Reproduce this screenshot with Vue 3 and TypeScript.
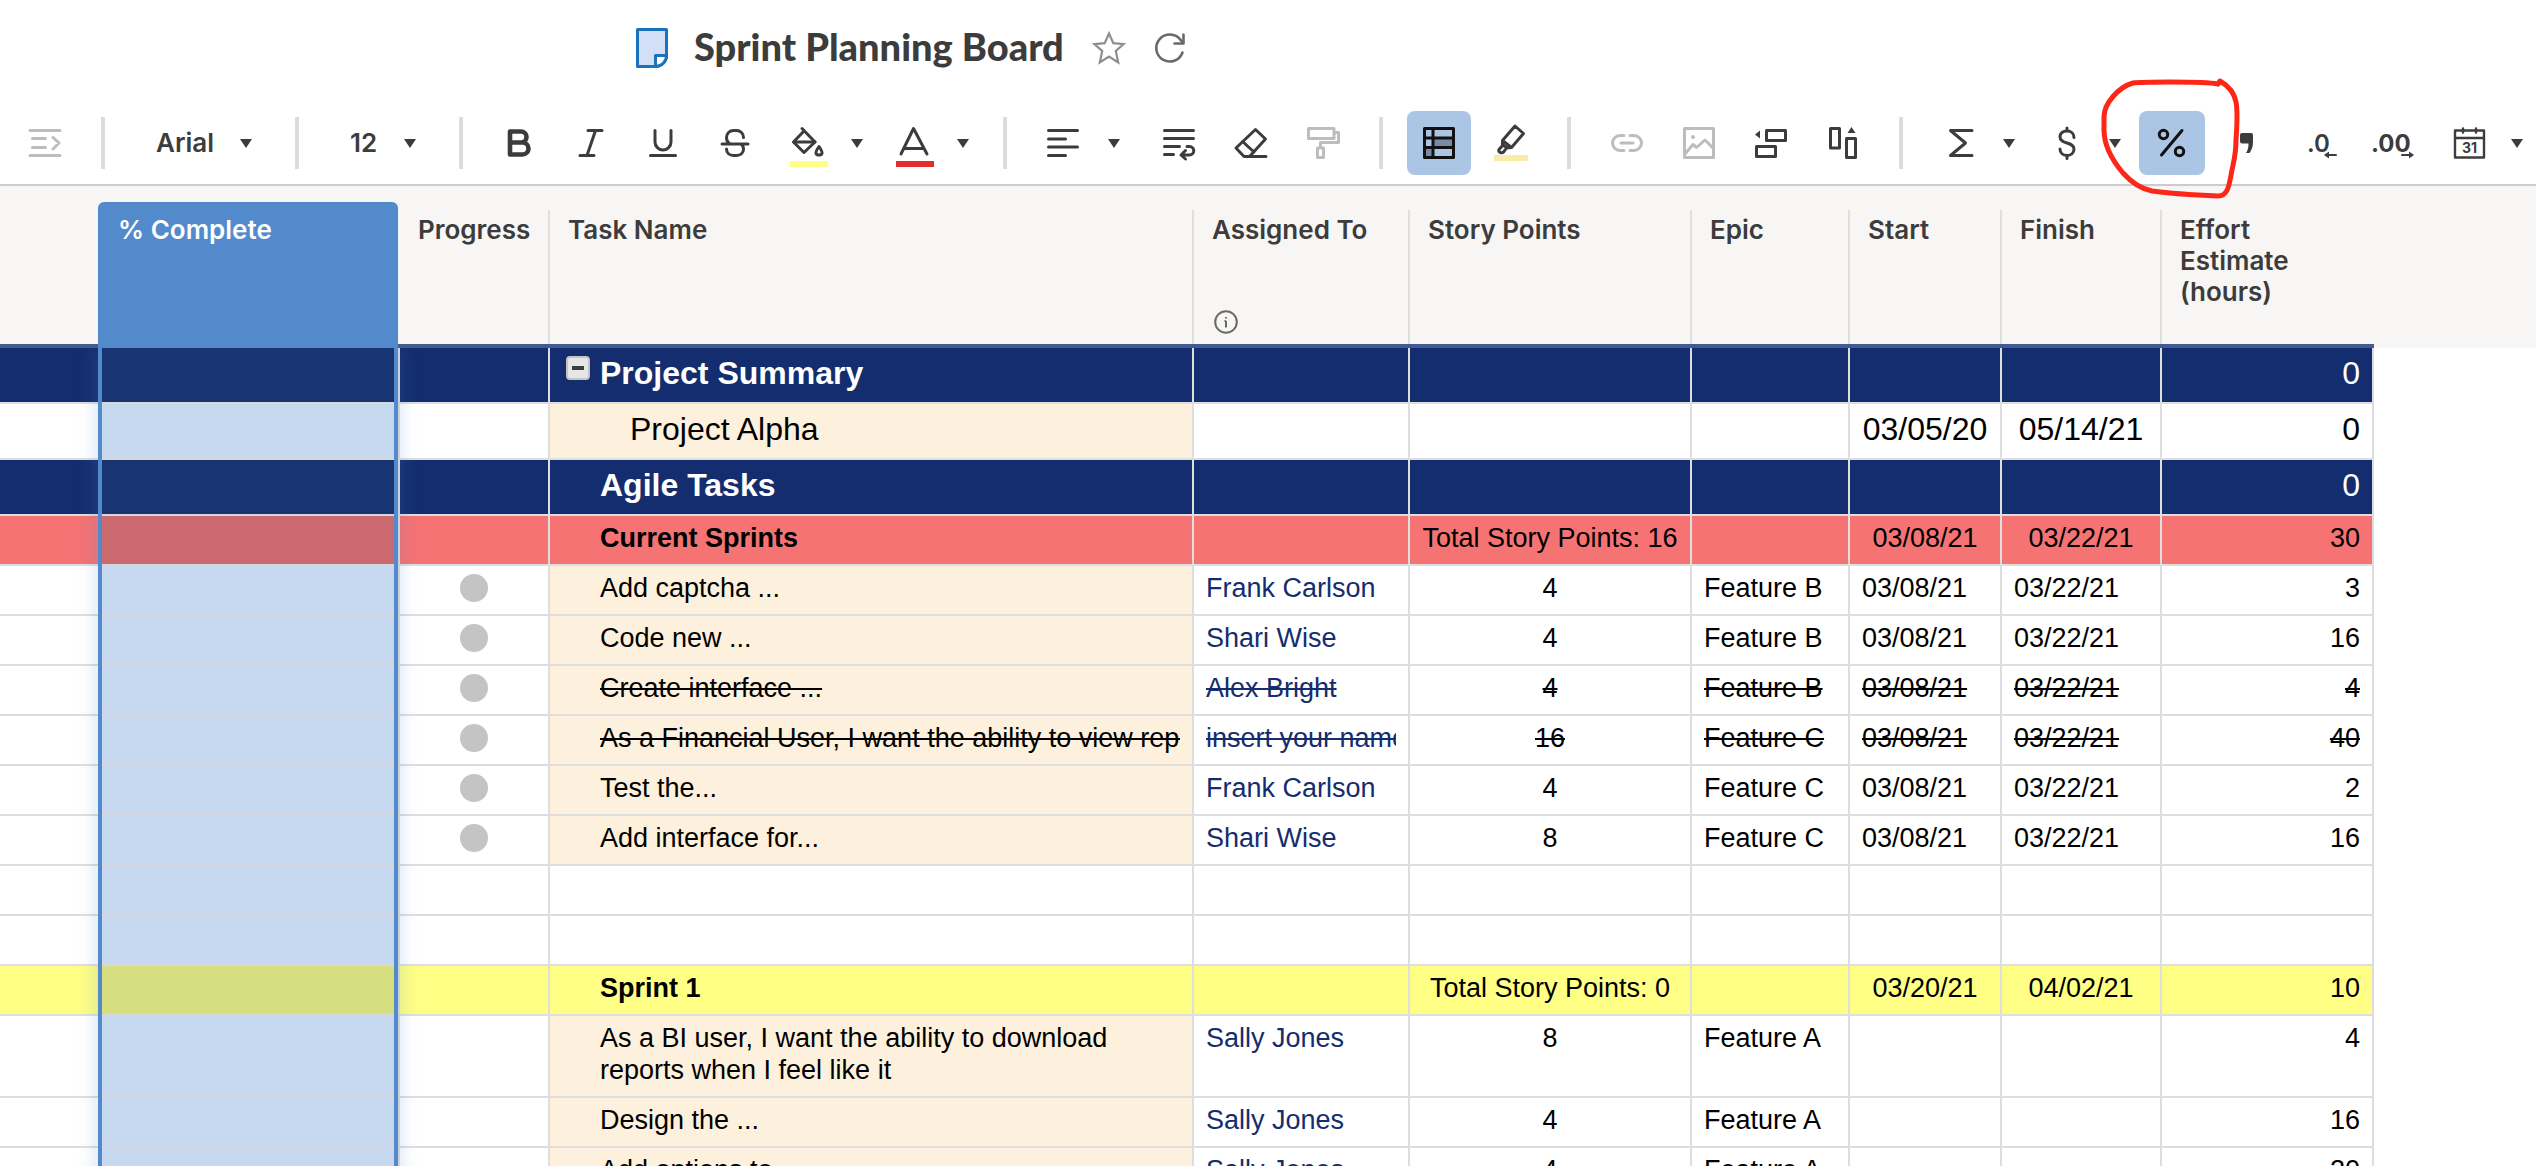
<script setup lang="ts">
import { ref } from 'vue'

type RowKind = 'summary' | 'current' | 'sprint' | 'task' | 'empty'

interface Row {
  kind: RowKind
  large?: boolean
  toggle?: boolean
  child?: boolean
  wrap?: boolean
  done?: boolean
  dot?: boolean
  centerDates?: boolean
  task?: string
  assigned?: string
  points?: string
  epic?: string
  start?: string
  finish?: string
  effort?: string
}

const font = ref('Arial')
const size = ref('12')

const columns = [
  { key: 'lead', label: '' },
  { key: 'complete', label: '% Complete' },
  { key: 'progress', label: 'Progress' },
  { key: 'task', label: 'Task Name' },
  { key: 'assigned', label: 'Assigned To', info: true },
  { key: 'points', label: 'Story Points' },
  { key: 'epic', label: 'Epic' },
  { key: 'start', label: 'Start' },
  { key: 'finish', label: 'Finish' },
  { key: 'effort', label: 'Effort Estimate (hours)' },
]

const rows: Row[] = [
  { kind: 'summary', large: true, toggle: true, task: 'Project Summary', effort: '0' },
  { kind: 'task', large: true, child: true, centerDates: true, task: 'Project Alpha', start: '03/05/20', finish: '05/14/21', effort: '0' },
  { kind: 'summary', large: true, task: 'Agile Tasks', effort: '0' },
  { kind: 'current', centerDates: true, task: 'Current Sprints', points: 'Total Story Points: 16', start: '03/08/21', finish: '03/22/21', effort: '30' },
  { kind: 'task', dot: true, task: 'Add captcha ...', assigned: 'Frank Carlson', points: '4', epic: 'Feature B', start: '03/08/21', finish: '03/22/21', effort: '3' },
  { kind: 'task', dot: true, task: 'Code new ...', assigned: 'Shari Wise', points: '4', epic: 'Feature B', start: '03/08/21', finish: '03/22/21', effort: '16' },
  { kind: 'task', dot: true, done: true, task: 'Create interface ...', assigned: 'Alex Bright', points: '4', epic: 'Feature B', start: '03/08/21', finish: '03/22/21', effort: '4' },
  { kind: 'task', dot: true, done: true, task: 'As a Financial User, I want the ability to view reports', assigned: 'insert your name', points: '16', epic: 'Feature C', start: '03/08/21', finish: '03/22/21', effort: '40' },
  { kind: 'task', dot: true, task: 'Test the...', assigned: 'Frank Carlson', points: '4', epic: 'Feature C', start: '03/08/21', finish: '03/22/21', effort: '2' },
  { kind: 'task', dot: true, task: 'Add interface for...', assigned: 'Shari Wise', points: '8', epic: 'Feature C', start: '03/08/21', finish: '03/22/21', effort: '16' },
  { kind: 'empty' },
  { kind: 'empty' },
  { kind: 'sprint', centerDates: true, task: 'Sprint 1', points: 'Total Story Points: 0', start: '03/20/21', finish: '04/02/21', effort: '10' },
  { kind: 'task', wrap: true, task: 'As a BI user, I want the ability to download reports when I feel like it', assigned: 'Sally Jones', points: '8', epic: 'Feature A', effort: '4' },
  { kind: 'task', task: 'Design the ...', assigned: 'Sally Jones', points: '4', epic: 'Feature A', effort: '16' },
  { kind: 'task', task: 'Add options to...', assigned: 'Sally Jones', points: '4', epic: 'Feature A', effort: '20' },
]
</script>

<template>
  <div class="app">
    <header class="titlebar">
      <svg class="sheet-icon" width="32" height="40" viewBox="0 0 32 40" aria-hidden="true">
        <path d="M1.5 1.5h29v26c0 6-5 11-11 11h-18z" fill="#d3dff6" stroke="#1a72bd" stroke-width="3" stroke-linejoin="round" />
        <path d="M19.5 38.5v-11h11c0 6-5 11-11 11z" fill="#fff" stroke="#1a72bd" stroke-width="3" stroke-linejoin="round" />
      </svg>
      <h1>Sprint Planning Board</h1>
      <button class="plain star" aria-label="Favorite">
        <svg width="34" height="34" viewBox="0 0 34 34"><path d="M17 2.500l4.300 9.600 10.400 1-7.900 6.900 2.400 11.400-9.200-5.900-9.200 5.900L10.200 20 2.300 13.100l10.400-1z" fill="none" stroke="#8e8e8e" stroke-width="2.200" /></svg>
      </button>
      <button class="plain" aria-label="Refresh">
        <svg width="34" height="34" viewBox="0 0 34 34"><g fill="none" stroke="#6a6a6a" stroke-width="2.600" stroke-linecap="round" stroke-linejoin="round"><path d="M30.500 21.500A13.500 13.500 0 1 1 28.500 8.800L30.800 11.800" /><path d="M31.500 3.500v9h-9" /></g></svg>
      </button>
    </header>

    <div class="toolbar" role="toolbar">
      <button class="tool muted" aria-label="Indent">
        <svg viewBox="0 0 40 56"><path d="M5 15.500h30M7.500 23.500h13M7.500 32.500h13M5 40.500h30M28 22.500l6 5.500-6 6" /></svg>
      </button>
      <span class="sep"></span>
      <label class="picker font-picker">
        <select v-model="font" aria-label="Font"><option>Arial</option><option>Verdana</option></select>
        <svg class="caret" viewBox="0 0 12 9"><path d="M0 0h12L6 9z" /></svg>
      </label>
      <span class="sep"></span>
      <label class="picker size-picker">
        <select v-model="size" aria-label="Font size"><option>10</option><option>12</option></select>
        <svg class="caret" viewBox="0 0 12 9"><path d="M0 0h12L6 9z" /></svg>
      </label>
      <span class="sep"></span>
      <button class="tool" aria-label="Bold">
        <svg viewBox="0 0 40 56"><path stroke-width="4.600" d="M11 16.500v23h12.500a6 6 0 0 0 0-12H11M11 16.500h11a5.500 5.500 0 0 1 0 11" /></svg>
      </button>
      <button class="tool" aria-label="Italic">
        <svg viewBox="0 0 40 56"><path d="M17 15.500h14M9 40.500h14M24.500 15.500L16 40.500" /></svg>
      </button>
      <button class="tool" aria-label="Underline">
        <svg viewBox="0 0 40 56"><path d="M12 15.500V27a8 8 0 0 0 16 0V15.500M7.500 40.500h25" /></svg>
      </button>
      <button class="tool" aria-label="Strikethrough">
        <svg viewBox="0 0 40 56"><path d="M28.500 22.500c0-4-3-7-7-7h-3c-4 0-7 3-7 7 0 3 1 5 3 6M11.500 34c0 4 3 6.500 7 6.500h3c4 0 7-2.500 7-6.500 0-2-1-4-3-5M7 29h26" /></svg>
      </button>
      <button class="tool split" aria-label="Fill color">
        <svg viewBox="0 0 40 56">
          <path d="M13 13.500l13 13.500L15 37.500 4.500 27 14.500 16.500" />
          <path d="M5 27h21" />
          <path d="M30 31.500c-5 7-3 8.500 0 8.500s5-1.500 0-8.500z" />
          <rect x="1" y="46" width="38" height="6" fill="#ffff85" stroke="none" />
        </svg>
        <svg class="caret" viewBox="0 0 12 9"><path d="M0 0h12L6 9z" /></svg>
      </button>
      <button class="tool split" aria-label="Text color">
        <svg viewBox="0 0 40 56">
          <path d="M6 39L18.500 13.500 32 39M10 33.500h18" />
          <rect x="1" y="46" width="38" height="6" fill="#e52c2c" stroke="none" />
        </svg>
        <svg class="caret" viewBox="0 0 12 9"><path d="M0 0h12L6 9z" /></svg>
      </button>
      <span class="sep"></span>
      <button class="tool split align" aria-label="Align">
        <svg viewBox="0 0 40 56"><path d="M5.500 15.500h29M5.500 24h17M5.500 32h29M5.500 40.500h17" /></svg>
        <svg class="caret" viewBox="0 0 12 9"><path d="M0 0h12L6 9z" /></svg>
      </button>
      <button class="tool" aria-label="Wrap text">
        <svg viewBox="0 0 40 56"><path d="M5.500 15.500h29M5.500 23.500h29M5.500 31.500h15M5.500 39.500h9M28 31.500h2.500a4.200 4.200 0 0 1 0 8.500H22M26.500 35.500L22 40l4.500 4" /></svg>
      </button>
      <button class="tool" aria-label="Clear format">
        <svg viewBox="0 0 40 56"><path d="M35 41.500H13L5 33 24.500 14.500l10 9.500L19 41M11.500 26.500L23 37" /></svg>
      </button>
      <button class="tool muted" aria-label="Format painter">
        <svg viewBox="0 0 40 56"><path d="M5.500 13.500H31v10H5.500zM31 17.500h4.500v10h-18V33M14.500 33h6v9.500h-6z" /></svg>
      </button>
      <span class="sep"></span>
      <button class="tool active" aria-label="Conditional formatting">
        <svg viewBox="0 0 40 56">
          <path d="M14 23h20v9.500H14zM6 32.500h8v9H6z" fill="#7a8aa5" stroke="none" />
          <path d="M5.500 13.500h29v29h-29zM14 13.500v29M5.500 23h29M5.500 32.500h29" />
        </svg>
      </button>
      <button class="tool" aria-label="Highlight changes">
        <svg viewBox="0 0 40 56">
          <path d="M24 11l8.500 7.500L20.500 32.500l-9-7zM11.500 25.500v5L8 34.500c-1 3 3 4.500 5 2l2.500-3.500 4.500-.5M12 30l4 3" />
          <rect x="3" y="40" width="34" height="6" rx="1" fill="#faeba9" stroke="none" />
        </svg>
      </button>
      <span class="sep"></span>
      <button class="tool muted" aria-label="Link">
        <svg viewBox="0 0 40 56"><path d="M17 20.500h-4a7.500 7.500 0 0 0 0 15h4M23 20.500h4a7.500 7.500 0 0 1 0 15h-4M14 28h12" /></svg>
      </button>
      <button class="tool muted" aria-label="Image">
        <svg viewBox="0 0 40 56"><path d="M5.500 13.500h29v29h-29zM6 39l8-9.500 3.500 3L26 25l8.500 8.500" /><circle cx="14" cy="22" r="2" class="solid" /></svg>
      </button>
      <button class="tool" aria-label="Insert row">
        <svg viewBox="0 0 40 56"><path d="M15.500 15.500h19v10h-19zM5.500 31.500h19v10h-19z" /><path class="solid" d="M4 19.500l5-4v8z" /></svg>
      </button>
      <button class="tool" aria-label="Insert column">
        <svg viewBox="0 0 40 56"><path d="M7.500 13.500h9V33h-9zM23.500 23.500h9v19h-9z" /><path class="solid" d="M28.500 12l4 6h-8z" /></svg>
      </button>
      <span class="sep"></span>
      <button class="tool split" aria-label="Sum">
        <svg viewBox="0 0 40 56"><path d="M31 15.500H9.500L24.500 28 9.500 40.500H31" /></svg>
        <svg class="caret" viewBox="0 0 12 9"><path d="M0 0h12L6 9z" /></svg>
      </button>
      <button class="tool split" aria-label="Currency format">
        <svg viewBox="0 0 40 56"><path d="M27 22.500c0-4-3-6.500-7-6.500s-7 2-7 6c0 8 14 4 14 12 0 4-3 6.500-7 6.500s-7-2.500-7-6.500M20 13v3M20 40.500v3" /></svg>
        <svg class="caret" viewBox="0 0 12 9"><path d="M0 0h12L6 9z" /></svg>
      </button>
      <span class="marked">
        <button class="tool wide active" aria-label="Percent format">
          <svg viewBox="0 0 40 56"><circle cx="11.500" cy="19.500" r="4.200" /><circle cx="27.500" cy="36.500" r="4.200" /><path d="M30 15.500L9.500 40" /></svg>
        </button>
        <svg class="scribble" width="160" height="140" viewBox="0 0 160 140" aria-hidden="true">
          <path d="M128 14C118 12 100 12 80 12C64 12 50 12 43 13C29 17 14 33 14 47V60C14 75 22 90 33 103C42 113 52 119 62 121C84 124 104 125 128 126C138 126 139 116 142 100C144 90 146 84 146 70C147 56 148 42 146 32C144 22 137 15 130 11L128 14" />
        </svg>
      </span>
      <button class="tool wide" aria-label="Thousands format">
        <svg viewBox="0 0 40 56"><path class="comma" d="M14 20a2 2 0 0 1 2-2h9a2 2 0 0 1 2 2v7c0 5-1.500 8-3.500 11H20c2-3 2.500-6 2.500-9.500H16a2 2 0 0 1-2-2z" /></svg>
      </button>
      <button class="tool wide" aria-label="Decrease decimal">
        <svg viewBox="0 0 40 56"><text x="7" y="37" font-size="24" font-weight="600">.0</text><path stroke-width="2" d="M26 40h10" /><path class="solid" d="M24 40l5-3.500v7z" /></svg>
      </button>
      <button class="tool wide" aria-label="Increase decimal">
        <svg viewBox="0 0 40 56"><text x="-3" y="37" font-size="24" font-weight="700">.00</text><path stroke-width="2" d="M28 40h10" /><path class="solid" d="M40 40l-5-3.500v7z" /></svg>
      </button>
      <button class="tool split" aria-label="Date format">
        <svg viewBox="0 0 40 56"><path stroke-width="2.400" d="M6 15.500h29v27H6zM6 23h29M14 13.500v4M27 13.500v4" /><text x="20.500" y="37.500" font-size="14" font-weight="700" text-anchor="middle">31</text></svg>
        <svg class="caret" viewBox="0 0 12 9"><path d="M0 0h12L6 9z" /></svg>
      </button>
    </div>

    <main class="sheet">
      <table>
        <colgroup>
          <col v-for="c in columns" :key="c.key" :class="'w-' + c.key" />
        </colgroup>
        <thead>
          <tr>
            <th v-for="c in columns" :key="c.key" scope="col" :class="'h-' + c.key">
              <div class="head">
                <span class="head-label">{{ c.label }}</span>
                <svg v-if="c.info" class="info" width="24" height="24" viewBox="0 0 24 24" aria-hidden="true">
                  <circle cx="12" cy="12" r="10.800" />
                  <path d="M12 11v6.500M10.500 11H12M12 7v1.500" />
                </svg>
              </div>
            </th>
          </tr>
        </thead>
        <tbody>
          <tr v-for="(r, i) in rows" :key="i" :class="[r.kind, { large: r.large, done: r.done }]">
            <td class="lead"></td>
            <td class="picked"></td>
            <td class="progress"><span v-if="r.dot" class="dot"></span></td>
            <td class="task-cell">
              <div class="task-line">
                <span class="gutter" :class="{ deep: r.child }">
                  <button v-if="r.toggle" class="toggle" aria-label="Collapse"><span></span></button>
                </span>
                <span class="value" :class="{ wrap: r.wrap }">{{ r.task }}</span>
              </div>
            </td>
            <td class="person"><div class="value">{{ r.assigned }}</div></td>
            <td class="center"><div class="value">{{ r.points }}</div></td>
            <td><div class="value">{{ r.epic }}</div></td>
            <td :class="{ center: r.centerDates }"><div class="value">{{ r.start }}</div></td>
            <td :class="{ center: r.centerDates }"><div class="value">{{ r.finish }}</div></td>
            <td class="right"><div class="value">{{ r.effort }}</div></td>
          </tr>
        </tbody>
      </table>
      <div class="selection"></div>
    </main>
  </div>
</template>

<style>
body {
  margin: 0;
  background: #fff;
}
</style>

<style scoped>
.app {
  display: flex;
  flex-direction: column;
  height: 100vh;
  overflow: hidden;
  background: #fff;
  color: #3c3c3c;
  font-family: "Liberation Sans", Arial, sans-serif;
}

button {
  margin: 0;
  padding: 0;
  border: 0;
  background: none;
  font: inherit;
  color: inherit;
}

/* Title */
.titlebar {
  display: flex;
  flex: none;
  align-items: center;
  height: 96px;
  padding: 0 0 6px 636px;
}

.titlebar h1 {
  margin: 0 28px 4px 26px;
  font-family: Lato, sans-serif;
  font-size: 38px;
  font-weight: 900;
  line-height: 44px;
  white-space: nowrap;
}

.plain svg {
  display: block;
}

.star {
  margin-right: 26px;
}

/* Toolbar */
.toolbar {
  display: flex;
  flex: none;
  align-items: center;
  height: 82px;
  padding-left: 9px;
  border-bottom: 2px solid #ccc;
}

.sep {
  flex: none;
  width: 4px;
  height: 52px;
  margin: 0 20px;
  background: #dcdcdc;
}

.picker {
  display: grid;
  flex: none;
  align-items: center;
  height: 64px;
}

.picker > * {
  grid-area: 1 / 1;
}

.font-picker {
  width: 150px;
}

.size-picker {
  width: 120px;
}

.picker select {
  width: 100%;
  height: 64px;
  padding: 0 0 2px 31px;
  border: 0;
  background: none;
  appearance: none;
  color: #3c3c3c;
  font-family: Inter, sans-serif;
  font-size: 26px;
  font-weight: 600;
}

.picker .caret {
  justify-self: end;
  margin-right: 23px;
  pointer-events: none;
}

.tool {
  display: flex;
  flex: none;
  align-items: center;
  justify-content: center;
  width: 72px;
  height: 64px;
}

.tool svg {
  flex: none;
  width: 40px;
  height: 56px;
  overflow: visible;
  fill: none;
  stroke: #3c3c3c;
  stroke-width: 3;
  stroke-linecap: round;
  stroke-linejoin: round;
}

.tool text {
  fill: #3c3c3c;
  stroke: none;
  font-family: Inter, sans-serif;
}

.tool .solid,
.tool .comma {
  fill: #3c3c3c;
  stroke: none;
}

.muted svg {
  stroke: #bdbdbd;
}

.tool.muted .solid {
  fill: #bdbdbd;
}

.tool.split {
  justify-content: flex-start;
  width: 106px;
  padding-left: 18px;
}

.tool.split.align {
  width: 116px;
  padding-left: 16px;
}

.tool.wide {
  width: 74px;
}

svg.caret,
.tool svg.caret {
  width: 12px;
  height: 9px;
  fill: #3c3c3c;
  stroke: none;
}

.tool svg.caret {
  margin-left: 22px;
}

.tool.align svg.caret {
  margin-left: 25px;
}

.tool.active {
  width: 64px;
  margin: 0 4px;
  border-radius: 8px;
  background: #abc5e5;
}

.tool.wide.active {
  width: 66px;
}

.tool.active svg {
  stroke: #111;
}

.marked {
  position: relative;
  z-index: 2;
  flex: none;
}

.scribble {
  position: absolute;
  top: -41px;
  left: -45px;
  fill: none;
  stroke: #fd2718;
  stroke-width: 5;
  stroke-linejoin: round;
  stroke-linecap: round;
  pointer-events: none;
}

/* Sheet */
.sheet {
  position: relative;
  flex: 1;
  min-height: 0;
  overflow: hidden;
  background: linear-gradient(#f7f6f4 162px, #fff 162px);
}

table {
  width: 2374px;
  border-spacing: 0;
  table-layout: fixed;
}

.w-lead { width: 98px; }
.w-complete { width: 302px; }
.w-progress { width: 150px; }
.w-task { width: 644px; }
.w-assigned { width: 216px; }
.w-points { width: 282px; }
.w-epic { width: 158px; }
.w-start { width: 152px; }
.w-finish { width: 160px; }
.w-effort { width: 212px; }

th {
  padding: 24px 0 0;
  border-bottom: 4px solid #435a93;
  text-align: left;
  vertical-align: top;
}

.head {
  display: flex;
  flex-direction: column;
  justify-content: space-between;
  align-items: flex-start;
  box-sizing: border-box;
  height: 134px;
  padding: 4px 10px 10px 18px;
  border-right: 2px solid #dedede;
  font-family: Inter, sans-serif;
  font-size: 26px;
  font-weight: 600;
  line-height: 31px;
}

.h-lead .head,
.h-effort .head {
  border-right: 0;
}

.h-effort .head {
  padding-right: 60px;
}

.h-complete {
  padding-top: 16px;
  border-bottom: 0;
  background: linear-gradient(#435a93, #435a93) right bottom / 2px 4px no-repeat;
}

.h-complete .head {
  width: 300px;
  height: 146px;
  padding: 12px 20px;
  border: 0;
  border-radius: 6px 6px 0 0;
  background: #538acc;
  color: #fff;
}

.info {
  margin-left: 2px;
  fill: none;
  stroke: #6a6a6a;
  stroke-width: 2;
}

td {
  padding: 6px 12px 10px;
  border-right: 2px solid #dedede;
  border-bottom: 2px solid #dedede;
  color: #000;
  font-size: 27px;
  line-height: 32px;
  vertical-align: top;
}

.lead {
  border-right: 0;
}

.large td {
  font-size: 32px;
  line-height: 38px;
}

.value {
  min-height: 32px;
  overflow: hidden;
  white-space: nowrap;
}

.value.wrap {
  white-space: normal;
}

.task-line {
  display: flex;
}

.task-line .value {
  flex: 1;
  min-width: 0;
}

.gutter {
  flex: none;
  width: 38px;
}

.gutter.deep {
  width: 68px;
}

.toggle {
  display: grid;
  place-items: center;
  box-sizing: border-box;
  width: 24px;
  height: 24px;
  margin: 2px 0 0 4px;
  border: 2px solid #c4c4c4;
  border-radius: 4px;
  background: #e6e6e6;
}

.toggle span {
  width: 12px;
  height: 4px;
  background: #3c3c3c;
}

.center {
  text-align: center;
}

.right {
  text-align: right;
}

.person {
  color: #142d6e;
}

.progress {
  padding: 8px 0 0;
}

.dot {
  display: block;
  width: 28px;
  height: 28px;
  margin: 0 auto;
  border-radius: 50%;
  background: #c4c4c4;
}

.task .task-cell {
  background: #fdf0dc;
}

.picked {
  border-bottom-color: #d5d7db;
  background: #c7d9ef;
}

.summary td {
  background: #142d6e;
  color: #fff;
}

.summary td.picked {
  background: #183473;
}

.current td {
  background: #f57373;
}

.current td.picked {
  background: #cc6a71;
}

.sprint td {
  background: #ffff85;
}

.sprint td.picked {
  background: #d7de80;
}

.summary .task-cell,
.current .task-cell,
.sprint .task-cell {
  font-weight: 700;
}

.done .value {
  text-decoration: line-through;
}

.selection {
  position: absolute;
  top: 162px;
  bottom: -40px;
  left: 98px;
  box-sizing: border-box;
  width: 300px;
  border: 4px solid #538acc;
  border-width: 0 4px;
  box-shadow: 0 0 20px rgba(83, 138, 204, 0.28);
  clip-path: inset(0 -24px);
  pointer-events: none;
}
</style>
